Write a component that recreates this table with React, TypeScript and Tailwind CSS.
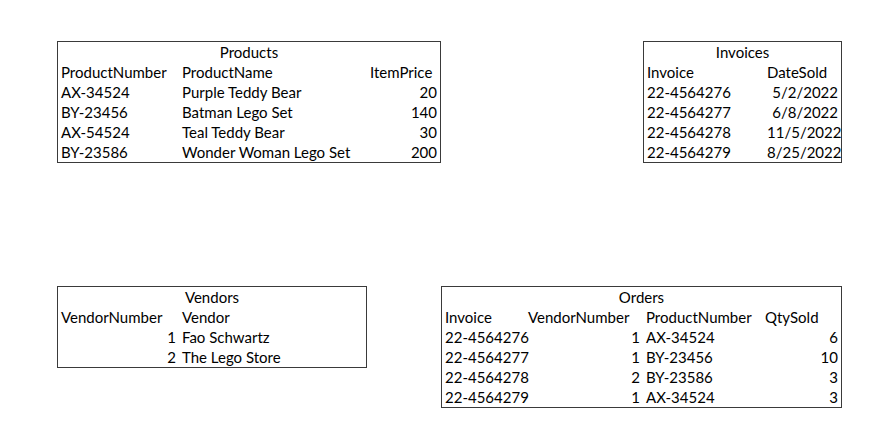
type Cell = string | number;

type Table = {
  title: string;
  widths: number[];
  header: string[];
  rows: Cell[][];
  className: string;
};

const products: Table = {
  title: "Products",
  widths: [121, 188, 73],
  header: ["ProductNumber", "ProductName", "ItemPrice"],
  rows: [
    ["AX-34524", "Purple Teddy Bear", 20],
    ["BY-23456", "Batman Lego Set", 140],
    ["AX-54524", "Teal Teddy Bear", 30],
    ["BY-23586", "Wonder Woman Lego Set", 200],
  ],
  className: "w-[384px]",
};

const invoices: Table = {
  title: "Invoices",
  widths: [120, 77],
  header: ["Invoice", "DateSold"],
  rows: [
    ["22-4564276", "5/2/2022"],
    ["22-4564277", "6/8/2022"],
    ["22-4564278", "11/5/2022"],
    ["22-4564279", "8/25/2022"],
  ],
  className: "w-[199px]",
};

const vendors: Table = {
  title: "Vendors",
  widths: [121, 187],
  header: ["VendorNumber", "Vendor"],
  rows: [
    [1, "Fao Schwartz"],
    [2, "The Lego Store"],
  ],
  className: "w-[310px]",
};

const orders: Table = {
  title: "Orders",
  widths: [83, 118, 119, 79],
  header: ["Invoice", "VendorNumber", "ProductNumber", "QtySold"],
  rows: [
    ["22-4564276", 1, "AX-34524", 6],
    ["22-4564277", 1, "BY-23456", 10],
    ["22-4564278", 2, "BY-23586", 3],
    ["22-4564279", 1, "AX-34524", 3],
  ],
  className: "w-[401px]",
};

// Dates count as numbers in the sheet, so they sit right as well
const isRight = (v: Cell) => typeof v === "number" || /^\d+\/\d+\/\d+$/.test(v);

const SheetTable = ({ table }: { table: Table }) => (
  <div className={`${table.className} border border-[#3a3a3a] bg-white`}>
    <div className="h-[20px] leading-[20px] text-center">{table.title}</div>
    {[table.header, ...table.rows].map((row, r) => (
      <div key={r} className="flex h-[20px] leading-[20px]">
        {row.map((v, c) => (
          <div
            key={c}
            style={{ width: table.widths[c] }}
            className={`shrink-0 px-[3px] whitespace-nowrap overflow-visible ${
              isRight(v) ? "text-right" : "text-left"
            }`}
          >
            {v}
          </div>
        ))}
      </div>
    ))}
  </div>
);

export default function App() {
  return (
    <div className="w-[876px] h-[443px] bg-white text-black text-[15px] font-['Lato','Open_Sans',sans-serif] pt-[41px] pl-[57px] pr-[34px]">
      <div className="flex justify-between items-start">
        <SheetTable table={products} />
        <SheetTable table={invoices} />
      </div>
      <div className="flex justify-between items-start mt-[123px]">
        <SheetTable table={vendors} />
        <SheetTable table={orders} />
      </div>
    </div>
  );
}
